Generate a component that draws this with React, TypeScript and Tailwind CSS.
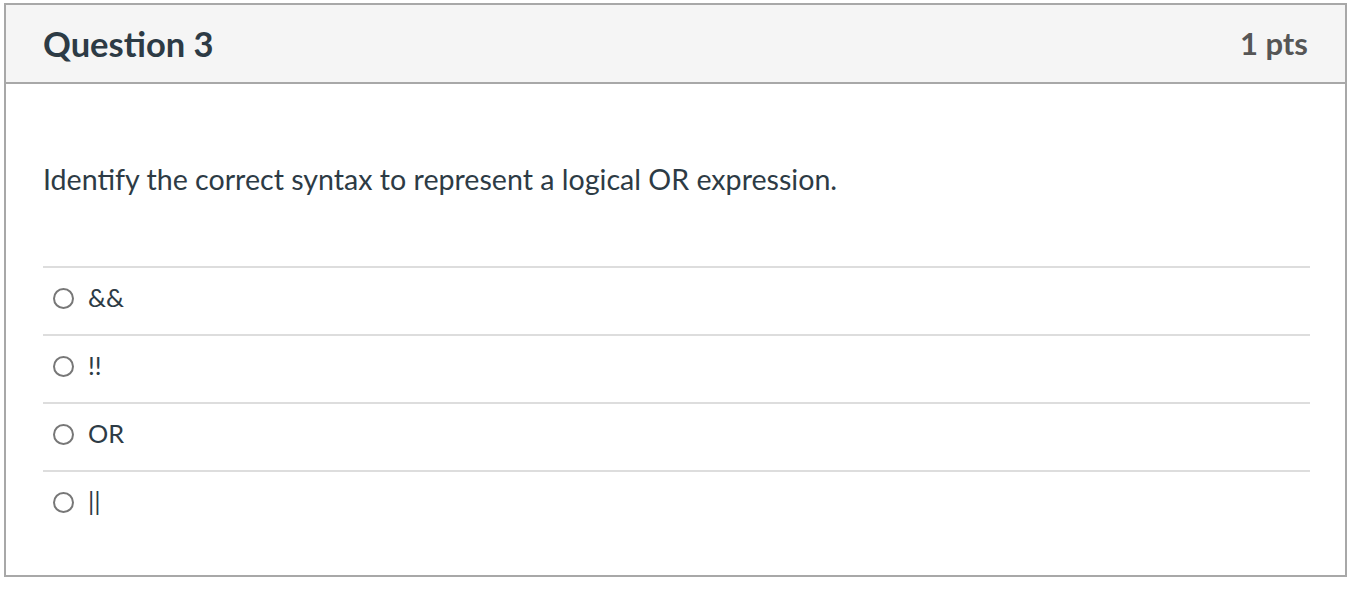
const OPTIONS = ["&&", "!!", "OR", "||"];

function Radio() {
  return (
    <span className="block h-[21px] w-[21px] shrink-0 rounded-full border-2 border-[#777777] bg-white" />
  );
}

export default function App() {
  return (
    <div className="min-h-[596px] bg-white pt-[3px] pl-[4px]" style={{ fontFamily: "Lato, 'Noto Sans', sans-serif" }}>
      <div className="w-[1343px] border-2 border-[#a8a8a8] bg-white">
        <div className="flex h-[79px] items-center justify-between border-b-2 border-[#a8a8a8] bg-[#f5f5f5] pl-[37px] pr-[37px]">
          <h2 className="text-[34.5px] font-bold text-[#2d3b45]">Question 3</h2>
          <span className="text-[31px] font-bold text-[#565656]">1 pts</span>
        </div>
        <div className="pl-[37px] pr-[35px] pt-[77px] pb-[37px]">
          <p className="text-[28.6px] leading-[36px] text-[#2d3b45]">
            Identify the correct syntax to represent a logical OR expression.
          </p>
          <div className="mt-[69px]">
            {OPTIONS.map((opt) => (
              <label
                key={opt}
                className="flex h-[68px] items-center gap-[14px] border-t-2 border-[#dddddd] pb-[6px] pl-[10px] text-[25.3px] text-[#2d3b45]"
              >
                <Radio />
                <span>{opt}</span>
              </label>
            ))}
          </div>
        </div>
      </div>
    </div>
  );
}
